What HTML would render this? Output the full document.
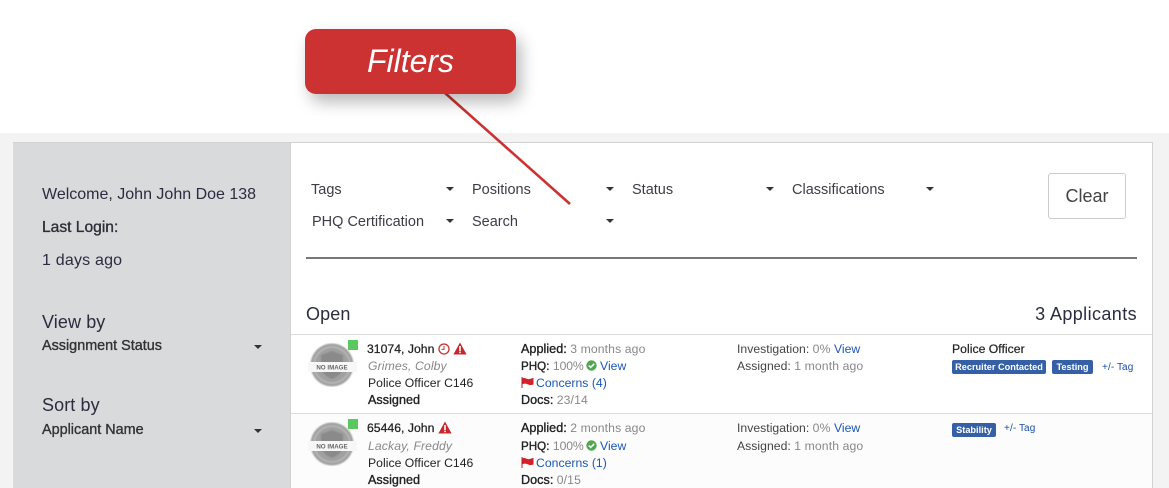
<!DOCTYPE html>
<html><head><meta charset="utf-8"><style>
html,body{margin:0;padding:0;width:1169px;height:488px;overflow:hidden;background:#fff}
body{position:relative;font-family:"Liberation Sans",sans-serif;color:#2b2b3a}
.a{position:absolute}
.t{position:absolute;white-space:nowrap;line-height:18px}
.f{font-size:14.5px;color:#3c3c48}
.car{position:absolute;width:0;height:0;border-left:4.5px solid transparent;border-right:4.5px solid transparent;border-top:4px solid #333}
.s{font-size:12.2px;color:#222;letter-spacing:.03px}
.g{color:#888;letter-spacing:.12px}
.l{color:#1b56b8}
b{font-weight:normal;-webkit-text-stroke:.35px currentColor;font-size:12.6px}
b.n{font-size:11.6px}
.sb{-webkit-text-stroke:.35px #333;color:#333;font-size:14.4px}
.tag{position:absolute;background:#3560a6;color:#fff;font-size:9.2px;font-weight:bold;line-height:14px;height:14px;border-radius:2px;text-align:center;white-space:nowrap}
.pt{font-size:10px;color:#1b4fa8;letter-spacing:.1px}
</style></head><body>
<div class="a" style="left:0;top:133px;width:1169px;height:355px;background:#f3f3f3"></div>
<div class="a" style="left:13px;top:142px;width:1140px;height:346px;background:#fff;border-top:1px solid #d2d2d2;border-right:1px solid #d2d2d2;box-sizing:border-box"></div>
<div class="a" style="left:13px;top:143px;width:277px;height:345px;background:#d9dadc;border-right:1px solid #d0d0d0"></div>

<div class="t" style="left:42px;top:186px;font-size:16px;color:#2c2c40">Welcome, John John Doe 138</div>
<div class="t sb" style="left:42px;top:219px;font-size:15.6px;color:#2c2c3c">Last Login:</div>
<div class="t" style="left:42px;top:252px;font-size:16px;letter-spacing:.2px;color:#2c2c40">1 days ago</div>
<div class="t" style="left:42px;top:313px;font-size:18px;letter-spacing:.1px;color:#2c2c40">View by</div>
<div class="t sb" style="left:42px;top:337px">Assignment Status</div>
<div class="car" style="left:254px;top:345px"></div>
<div class="t" style="left:42px;top:396px;font-size:18px;letter-spacing:.1px;color:#2c2c40">Sort by</div>
<div class="t sb" style="left:42px;top:421px">Applicant Name</div>
<div class="car" style="left:254px;top:429px"></div>

<div class="t f" style="left:311px;top:181px">Tags</div><div class="car" style="left:446px;top:187px"></div>
<div class="t f" style="left:472px;top:181px">Positions</div><div class="car" style="left:606px;top:187px"></div>
<div class="t f" style="left:632px;top:181px">Status</div><div class="car" style="left:766px;top:187px"></div>
<div class="t f" style="left:792px;top:181px">Classifications</div><div class="car" style="left:926px;top:187px"></div>
<div class="t f" style="left:312px;top:213px">PHQ Certification</div><div class="car" style="left:446px;top:219px"></div>
<div class="t f" style="left:472px;top:213px">Search</div><div class="car" style="left:606px;top:219px"></div>
<div class="a" style="left:1048px;top:173px;width:78px;height:46px;box-sizing:border-box;border:1px solid #ccc;border-radius:3px;background:#fff;text-align:center;line-height:45px;font-size:18px;color:#444">Clear</div>
<div class="a" style="left:306px;top:257px;width:831px;height:2px;background:#777"></div>

<div class="t" style="left:306px;top:305px;font-size:18px;letter-spacing:.1px;color:#2c2c40">Open</div>
<div class="t" style="right:32px;top:305px;font-size:18px;letter-spacing:.4px;color:#2c2c40">3 Applicants</div>

<div class="a" style="left:291px;top:334px;width:861px;height:1px;background:#ddd"></div>
<div class="a" style="left:291px;top:413px;width:861px;height:75px;background:#fcfcfc;border-top:1px solid #ddd"></div>

<svg class="a" style="left:305px;top:343px" width="54" height="44" viewBox="0 0 54 44">
<defs><filter id="bl" x="-10%" y="-10%" width="120%" height="120%"><feGaussianBlur stdDeviation=".7"/></filter></defs>
<g filter="url(#bl)"><circle cx="27" cy="22" r="21.500" fill="#a0a0a0"/><path d="M27 8 38 12V23C38 30 32 34 27 36 22 34 16 30 16 23V12Z" fill="#8a8a8a"/><circle cx="27" cy="22" r="18" fill="none" stroke="#c4c4c4" stroke-width="1"/></g>
<rect x="3" y="19" width="49" height="10" fill="#f7f7f7"/>
<text x="27" y="26.500" text-anchor="middle" font-size="6.200" font-weight="bold" fill="#666" font-family="Liberation Sans">NO IMAGE</text></svg>
<div class="a" style="left:348px;top:340px;width:10px;height:10px;background:#5bc85f"></div>
<svg class="a" style="left:305px;top:422px" width="54" height="44" viewBox="0 0 54 44">
<g filter="url(#bl)"><circle cx="27" cy="22" r="21.500" fill="#a0a0a0"/><path d="M27 8 38 12V23C38 30 32 34 27 36 22 34 16 30 16 23V12Z" fill="#8a8a8a"/><circle cx="27" cy="22" r="18" fill="none" stroke="#c4c4c4" stroke-width="1"/></g>
<rect x="3" y="19" width="49" height="10" fill="#f7f7f7"/>
<text x="27" y="26.500" text-anchor="middle" font-size="6.200" font-weight="bold" fill="#666" font-family="Liberation Sans">NO IMAGE</text></svg>
<div class="a" style="left:348px;top:419px;width:10px;height:10px;background:#5bc85f"></div>

<div class="t s" style="left:367px;top:340px;-webkit-text-stroke:.25px #222">31074, John</div>
<svg class="a" style="left:438px;top:343px" width="12" height="12" viewBox="0 0 12 12"><circle cx="6" cy="6" r="5" fill="none" stroke="#c9302c" stroke-width="1.300"/><path d="M6 3V6.400H3.600" fill="none" stroke="#c9302c" stroke-width="1"/></svg>
<svg class="a" style="left:453px;top:342px" width="14" height="13" viewBox="0 0 14 13"><path d="M7 .5 13.600 12.500H.4Z" fill="#c9262c"/><rect x="6.200" y="4" width="1.600" height="5" fill="#fff"/><rect x="6.200" y="9.600" width="1.600" height="1.600" fill="#fff"/></svg>
<div class="t s g" style="left:368px;top:357px;font-style:italic">Grimes, Colby</div>
<div class="t s" style="left:368px;top:374px">Police Officer C146</div>
<div class="t s" style="left:368px;top:391px"><b>Assigned</b></div>

<div class="t s" style="left:521px;top:340px"><b>Applied:</b> <span class="g">3 months ago</span></div>
<div class="t s" style="left:521px;top:357px"><b class="n">PHQ:</b> <span class="g" style="letter-spacing:-.1px">100%</span></div>
<svg class="a" style="left:586px;top:360px" width="11" height="11" viewBox="0 0 11 11"><circle cx="5.500" cy="5.500" r="5.200" fill="#4fa84f"/><path d="M2.800 5.600 4.700 7.400 8.200 3.800" fill="none" stroke="#fff" stroke-width="1.500"/></svg>
<div class="t s l" style="left:600px;top:357px">View</div>
<svg class="a" style="left:521px;top:377px" width="13" height="11" viewBox="0 0 13 11"><path d="M1 0V11" stroke="#b22" stroke-width="1"/><path d="M1.500 1.200C4 0 6 3 8.500 2 10 1.600 11.500 1.200 12.500 1V7.500C10 8.500 8 8 6 7 4.500 6.500 3 6.600 1.500 7.200Z" fill="#d3202a"/></svg>
<div class="t s l" style="left:536px;top:374px">Concerns (4)</div>
<div class="t s" style="left:521px;top:391px"><b>Docs:</b> <span class="g">23/14</span></div>

<div class="t s" style="left:737px;top:340px"><span style="color:#444">Investigation:</span> <span class="g">0%</span> <span class="l">View</span></div>
<div class="t s" style="left:737px;top:357px"><span style="color:#444">Assigned:</span> <span class="g">1 month ago</span></div>
<div class="t s" style="left:952px;top:340px;-webkit-text-stroke:.2px #222">Police Officer</div>
<div class="tag" style="left:952px;top:360px;width:94px">Recruiter Contacted</div>
<div class="tag" style="left:1052px;top:360px;width:41px">Testing</div>
<div class="t pt" style="left:1102px;top:359px">+/- Tag</div>

<div class="t s" style="left:367px;top:419px;-webkit-text-stroke:.25px #222">65446, John</div>
<svg class="a" style="left:438px;top:421px" width="14" height="13" viewBox="0 0 14 13"><path d="M7 .5 13.600 12.500H.4Z" fill="#c9262c"/><rect x="6.200" y="4" width="1.600" height="5" fill="#fff"/><rect x="6.200" y="9.600" width="1.600" height="1.600" fill="#fff"/></svg>
<div class="t s g" style="left:368px;top:437px;font-style:italic">Lackay, Freddy</div>
<div class="t s" style="left:368px;top:454px">Police Officer C146</div>
<div class="t s" style="left:368px;top:471px"><b>Assigned</b></div>

<div class="t s" style="left:521px;top:419px"><b>Applied:</b> <span class="g">2 months ago</span></div>
<div class="t s" style="left:521px;top:437px"><b class="n">PHQ:</b> <span class="g" style="letter-spacing:-.1px">100%</span></div>
<svg class="a" style="left:586px;top:440px" width="11" height="11" viewBox="0 0 11 11"><circle cx="5.500" cy="5.500" r="5.200" fill="#4fa84f"/><path d="M2.800 5.600 4.700 7.400 8.200 3.800" fill="none" stroke="#fff" stroke-width="1.500"/></svg>
<div class="t s l" style="left:600px;top:437px">View</div>
<svg class="a" style="left:521px;top:457px" width="13" height="11" viewBox="0 0 13 11"><path d="M1 0V11" stroke="#b22" stroke-width="1"/><path d="M1.500 1.200C4 0 6 3 8.500 2 10 1.600 11.500 1.200 12.500 1V7.500C10 8.500 8 8 6 7 4.500 6.500 3 6.600 1.500 7.200Z" fill="#d3202a"/></svg>
<div class="t s l" style="left:536px;top:454px">Concerns (1)</div>
<div class="t s" style="left:521px;top:471px"><b>Docs:</b> <span class="g">0/15</span></div>

<div class="t s" style="left:737px;top:419px"><span style="color:#444">Investigation:</span> <span class="g">0%</span> <span class="l">View</span></div>
<div class="t s" style="left:737px;top:437px"><span style="color:#444">Assigned:</span> <span class="g">1 month ago</span></div>
<div class="tag" style="left:952px;top:423px;width:44px">Stability</div>
<div class="t pt" style="left:1004px;top:420px">+/- Tag</div>

<svg class="a" style="left:0;top:0;pointer-events:none" width="1169" height="488"><path d="M445 93 570 204" stroke="#cd3232" stroke-width="2.600"/></svg>
<div class="a" style="left:305px;top:29px;width:211px;height:65px;border-radius:11px;background:#cd3232;box-shadow:5px 8px 16px rgba(0,0,0,.28);color:#fff;font-style:italic;font-size:32px;line-height:65px;text-align:center;">Filters</div>
</body></html>
